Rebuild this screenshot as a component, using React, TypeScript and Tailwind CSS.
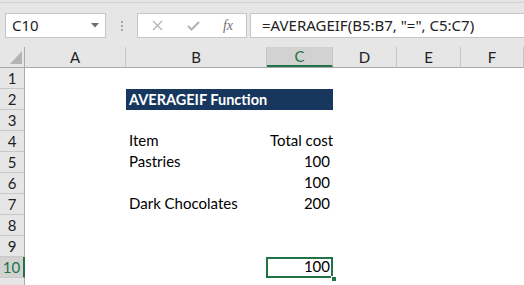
import React from "react";

const cols = [
  { key: "A", w: "w-[101px]" },
  { key: "B", w: "w-[141px]" },
  { key: "C", w: "w-[66px]" },
  { key: "D", w: "w-[64px]" },
  { key: "E", w: "w-[64px]" },
  { key: "F", w: "w-[63px]" },
];

type Row = { n: number; b?: string; c?: string; cAlign?: "left" | "right" };

const rows: Row[] = [
  { n: 1 },
  { n: 2 },
  { n: 3 },
  { n: 4, b: "Item", c: "Total cost", cAlign: "left" },
  { n: 5, b: "Pastries", c: "100" },
  { n: 6, c: "100" },
  { n: 7, b: "Dark Chocolates", c: "200" },
  { n: 8 },
  { n: 9 },
  { n: 10, c: "100" },
  { n: 11 },
];

const cellFont = { fontFamily: "Lato, 'Open Sans', sans-serif" };
const uiFont = { fontFamily: "'Noto Sans', 'Open Sans', sans-serif" };

function Toolbar() {
  return (
    <div className="h-[47px] pt-[2px] bg-[#e6e6e6]">
      <div className="h-[45px] border-t border-[#d4d4d4] flex items-start pt-[10px] pl-[5px]">
        <div className="w-[101px] h-[25px] bg-white border border-[#c6c6c6] flex items-center justify-between pl-[6px] pr-[6px]">
          <span className="text-[15px] text-[#222]" style={uiFont}>C10</span>
          <svg width="8" height="5" viewBox="0 0 8 5"><path d="M0 0 L8 0 L4 4.5 Z" fill="#6f6f6f" /></svg>
        </div>
        <div className="w-[31px] h-[25px] flex flex-col items-center justify-center gap-[2px]">
          <span className="w-[2px] h-[2px] bg-[#a6a6a6]" />
          <span className="w-[2px] h-[2px] bg-[#a6a6a6]" />
          <span className="w-[2px] h-[2px] bg-[#a6a6a6]" />
        </div>
        <div className="w-[110px] h-[25px] bg-white border border-[#c6c6c6] flex items-center">
          <div className="w-[38px] flex justify-center">
            <svg width="11" height="11" viewBox="0 0 11 11"><path d="M1 1 L10 10 M10 1 L1 10" stroke="#b3b3b3" strokeWidth="1.3" /></svg>
          </div>
          <div className="w-[34px] flex justify-center">
            <svg width="13" height="10" viewBox="0 0 13 10"><path d="M1 5 L4.5 8.5 L12 1" stroke="#b3b3b3" strokeWidth="2" fill="none" /></svg>
          </div>
          <div className="w-[36px] flex justify-center">
            <span className="italic text-[14px] text-[#6f6f6f]" style={{ fontFamily: "'Liberation Serif', serif" }}>fx</span>
          </div>
        </div>
        <div className="ml-[3px] flex-1 h-[25px] bg-white border-y border-l border-[#c6c6c6] flex items-center pl-[11px]">
          <span className="text-[15px] text-[#222] whitespace-nowrap" style={uiFont}>=AVERAGEIF(B5:B7, "=", C5:C7)</span>
        </div>
      </div>
    </div>
  );
}

function HeaderRow() {
  return (
    <div className="flex h-[21px] bg-[#e6e6e6] border-b border-[#ababab]">
      <div className="w-[25px] shrink-0 border-r border-[#ababab] relative">
        <svg className="absolute left-[10px] top-[4px]" width="13" height="14" viewBox="0 0 13 14"><path d="M12 0 L12 13 L0 13 Z" fill="#b4b4b4" /></svg>
      </div>
      {cols.map((c) => {
        const sel = c.key === "C";
        return (
          <div
            key={c.key}
            className={`${c.w} shrink-0 flex items-center justify-center text-[15px] border-r border-[#c6c6c6] ${
              sel ? "bg-[#d2d2d2] text-[#217346] border-b-2 border-b-[#217346]" : "text-[#222]"
            }`}
            style={cellFont}
          >
            {c.key}
          </div>
        );
      })}
    </div>
  );
}

function DataRow({ r }: { r: Row }) {
  const sel = r.n === 10;
  return (
    <div className="flex h-[21px] bg-white">
      <div
        className={`w-[25px] shrink-0 flex items-center justify-center text-[15px] border-b border-[#c8c8c8] ${
          sel ? "bg-[#d2d2d2] text-[#217346] border-r-2 border-r-[#217346]" : "bg-[#e6e6e6] text-[#222] border-r border-r-[#ababab]"
        }`}
        style={cellFont}
      >
        {r.n < 11 ? r.n : ""}
      </div>
      <div className="w-[101px] shrink-0" />
      {r.n === 2 ? (
        <div className="w-[207px] shrink-0 bg-[#17375e] flex items-center pl-[3px]">
          <span className="text-white font-bold text-[14.5px] whitespace-nowrap" style={cellFont}>
            AVERAGEIF Function
          </span>
        </div>
      ) : (
        <>
          <div className="w-[141px] shrink-0 flex items-end pl-[3px] pb-[1px] text-[15px] text-black whitespace-nowrap" style={cellFont}>
            {r.b}
          </div>
          <div
            className={`w-[66px] shrink-0 flex items-end pb-[1px] text-[15px] text-black whitespace-nowrap relative ${
              r.cAlign === "left" ? "justify-start pl-[3px]" : "justify-end pr-[3px]"
            }`}
            style={cellFont}
          >
            {r.c}
            {sel && (
              <>
                <span className="absolute left-[-1px] top-0 right-0 bottom-0 border-2 border-[#217346]" />
                <span className="absolute right-[-4px] bottom-[-4px] w-[6px] h-[6px] bg-[#217346] border border-white" />
              </>
            )}
          </div>
        </>
      )}
    </div>
  );
}

export default function App() {
  return (
    <div className="w-[524px] h-[285px] overflow-hidden bg-white">
      <Toolbar />
      <HeaderRow />
      {rows.map((r) => (
        <DataRow key={r.n} r={r} />
      ))}
    </div>
  );
}
